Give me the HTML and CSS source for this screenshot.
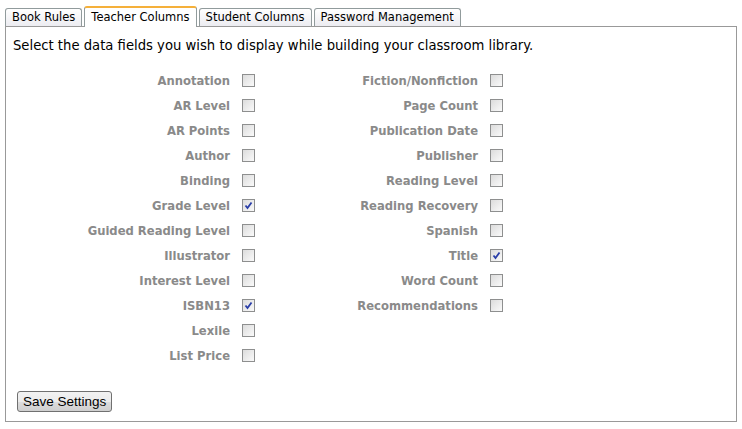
FILE: index.html
```html
<!DOCTYPE html>
<html>
<head>
<meta charset="utf-8">
<link rel="stylesheet" href="styles.css">
</head>
<body>
<div class="tabs">
  <div class="tab">Book Rules</div>
  <div class="tab active">Teacher Columns</div>
  <div class="tab">Student Columns</div>
  <div class="tab">Password Management</div>
</div>
<div class="panel">
  <p class="intro">Select the data fields you wish to display while building your classroom library.</p>
  <div class="fields">
    <div class="col col-left">
      <div class="row"><span class="lbl">Annotation</span><span class="cb"></span></div>
      <div class="row"><span class="lbl">AR Level</span><span class="cb"></span></div>
      <div class="row"><span class="lbl">AR Points</span><span class="cb"></span></div>
      <div class="row"><span class="lbl">Author</span><span class="cb"></span></div>
      <div class="row"><span class="lbl">Binding</span><span class="cb"></span></div>
      <div class="row"><span class="lbl">Grade Level</span><span class="cb checked"><svg viewBox="0 0 13 13" width="13" height="13"><path d="M3.5 6.5 L5.5 9 L9.5 3.5" fill="none" stroke="#2a3ea8" stroke-width="1.8"/></svg></span></div>
      <div class="row"><span class="lbl">Guided Reading Level</span><span class="cb"></span></div>
      <div class="row"><span class="lbl">Illustrator</span><span class="cb"></span></div>
      <div class="row"><span class="lbl">Interest Level</span><span class="cb"></span></div>
      <div class="row"><span class="lbl">ISBN13</span><span class="cb checked"><svg viewBox="0 0 13 13" width="13" height="13"><path d="M3.5 6.5 L5.5 9 L9.5 3.5" fill="none" stroke="#2a3ea8" stroke-width="1.8"/></svg></span></div>
      <div class="row"><span class="lbl">Lexile</span><span class="cb"></span></div>
      <div class="row"><span class="lbl">List Price</span><span class="cb"></span></div>
    </div>
    <div class="col col-right">
      <div class="row"><span class="lbl">Fiction/Nonfiction</span><span class="cb"></span></div>
      <div class="row"><span class="lbl">Page Count</span><span class="cb"></span></div>
      <div class="row"><span class="lbl">Publication Date</span><span class="cb"></span></div>
      <div class="row"><span class="lbl">Publisher</span><span class="cb"></span></div>
      <div class="row"><span class="lbl">Reading Level</span><span class="cb"></span></div>
      <div class="row"><span class="lbl">Reading Recovery</span><span class="cb"></span></div>
      <div class="row"><span class="lbl">Spanish</span><span class="cb"></span></div>
      <div class="row"><span class="lbl">Title</span><span class="cb checked"><svg viewBox="0 0 13 13" width="13" height="13"><path d="M3.5 6.5 L5.5 9 L9.5 3.5" fill="none" stroke="#2a3ea8" stroke-width="1.8"/></svg></span></div>
      <div class="row"><span class="lbl">Word Count</span><span class="cb"></span></div>
      <div class="row"><span class="lbl">Recommendations</span><span class="cb"></span></div>
    </div>
  </div>
  <button class="save">Save Settings</button>
</div>
</body>
</html>
```
FILE: styles.css
```css
html, body {
  margin: 0;
  padding: 0;
  background: #fff;
}
body {
  font-family: "DejaVu Sans", Verdana, sans-serif;
  color: #000;
}
.tabs {
  display: flex;
  align-items: flex-end;
  gap: 2px;
  padding: 5px 0 0 5px;
  height: 21px;
  position: relative;
  z-index: 1;
}
.tab {
  font-size: 11.5px;
  height: 17px;
  line-height: 17px;
  padding: 0 6px;
  border: 1px solid #919b9c;
  border-bottom: none;
  border-radius: 3px 3px 0 0;
  background: linear-gradient(#ffffff, #ececf1);
  color: #000;
  white-space: nowrap;
}
.tab.active {
  height: 19px;
  line-height: 19px;
  background: #fff;
  border-top: 2px solid #f5b03a;
  margin-bottom: -1px;
}
.panel {
  border: 1px solid #999;
  margin: 0 5px 0 5px;
  height: 396px;
  box-sizing: border-box;
  padding: 11px 0 0 7px;
}
.intro {
  margin: 0;
  font-size: 13.2px;
  line-height: 16px;
}
.fields {
  display: flex;
  margin-top: 14px;
  padding-left: 0;
}
.col {
  display: flex;
  flex-direction: column;
}
.col-left { width: 249px; }
.row {
  display: flex;
  align-items: center;
  height: 25px;
}
.lbl {
  width: 217px;
  text-align: right;
  font-weight: bold;
  font-size: 11.6px;
  color: #8a8a8a;
  white-space: nowrap;
}
.col-right .lbl { width: 216px; }
.cb {
  margin-left: 12px;
  width: 13px;
  height: 13px;
  box-sizing: border-box;
  border: 1px solid #8e8f8f;
  background: linear-gradient(135deg, #dcdcdc, #fafafa);
  position: relative;
}
.cb svg {
  position: absolute;
  left: -1px;
  top: -1px;
}
.save {
  margin: 23px 0 0 4px;
  font-family: "Liberation Sans", Arial, sans-serif;
  font-size: 13.5px;
  height: 21px;
  padding: 0 5px;
  border: 1px solid #707070;
  border-radius: 3px;
  background: linear-gradient(#f2f2f2 0%, #ebebeb 50%, #dddddd 51%, #cfcfcf 100%);
  color: #000;
}
```
